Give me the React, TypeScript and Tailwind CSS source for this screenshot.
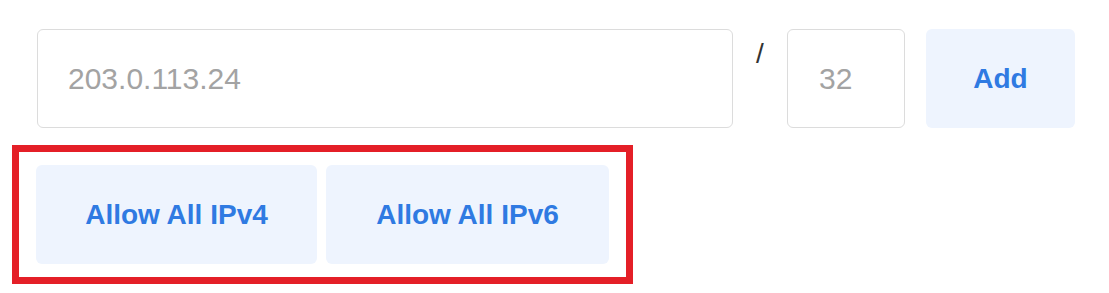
export default function App() {
  return (
    <div className="w-[1109px] h-[293px] bg-white pt-[29px] font-['Liberation_Sans',Arial,sans-serif]">
      <div className="flex items-stretch pl-[37px] h-[99px]">
        <input
          type="text"
          placeholder="203.0.113.24"
          className="w-[696px] h-full rounded-[6px] border-[1.5px] border-[#dcdcdc] bg-white px-[30px] text-[30px] text-[#333] outline-none placeholder:text-[#a3a3a3]"
        />
        <div className="w-[54px] pt-[11px] text-center text-[28px] leading-none text-[#333]">/</div>
        <input
          type="text"
          placeholder="32"
          className="w-[118px] h-full rounded-[6px] border-[1.5px] border-[#dcdcdc] bg-white px-[31px] text-[30px] text-[#333] outline-none placeholder:text-[#a3a3a3]"
        />
        <button className="ml-[21px] w-[149px] h-full rounded-[6px] bg-[#eef4fe] text-[28px] font-bold text-[#2f7ae2]">
          Add
        </button>
      </div>

      <div className="ml-[12px] mt-[17px] inline-flex gap-[9px] border-[7px] border-[#e41f27] pl-[17px] pr-[17px] pt-[13px] pb-[13px]">
        <button className="w-[281px] h-[99px] rounded-[6px] bg-[#eef4fe] text-[28px] font-bold text-[#2f7ae2]">
          Allow All IPv4
        </button>
        <button className="w-[283px] h-[99px] rounded-[6px] bg-[#eef4fe] text-[28px] font-bold text-[#2f7ae2]">
          Allow All IPv6
        </button>
      </div>
    </div>
  );
}
